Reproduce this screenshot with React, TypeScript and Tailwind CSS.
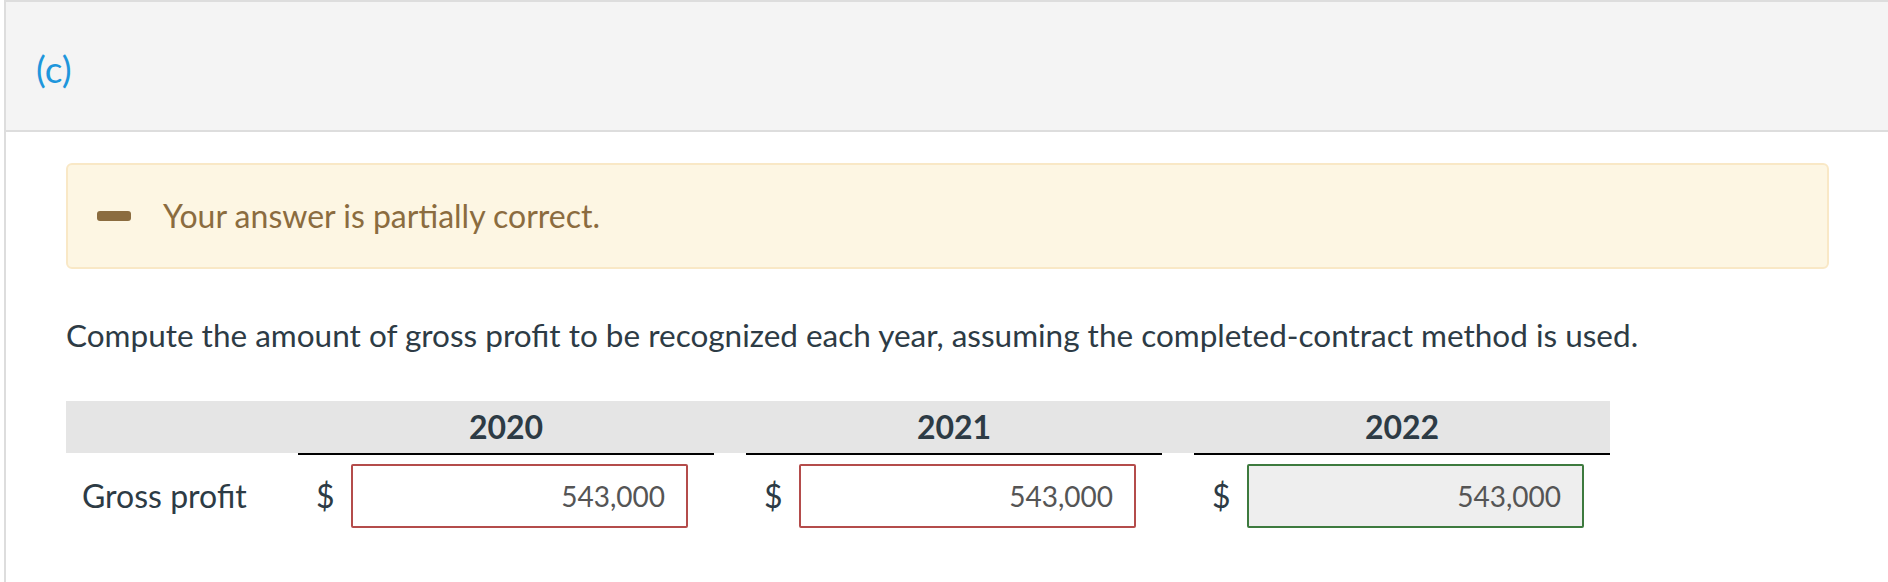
const years = [
  { year: "2020", value: "543,000", status: "wrong" },
  { year: "2021", value: "543,000", status: "wrong" },
  { year: "2022", value: "543,000", status: "right" },
];

const App = () => {
  return (
    <div className="min-h-screen bg-white pl-[4px] font-['Lato','Liberation_Sans',sans-serif]">
      <div className="min-h-[582px] border-l-2 border-t-2 border-[#dddddd]">
        <div className="flex h-[130px] items-center border-b-2 border-[#dddddd] bg-[#f4f4f4] pl-[30px] pt-[4px]">
          <span className="text-[37px] leading-none text-[#1e96dc]">(c)</span>
        </div>

        <div className="pl-[60px] pt-[31px]">
          <div className="flex h-[106px] w-[1763px] items-center rounded-[6px] border-2 border-[#f9e8c6] bg-[#fdf6e3] pl-[29px]">
            <span className="h-[10px] w-[34px] rounded-[3px] bg-[#8b6c3f]" />
            <span className="ml-[32px] text-[32px] leading-none text-[#8b6c3f]">
              Your answer is partially correct.
            </span>
          </div>

          <p className="mt-[43px] text-[31.5px] leading-[46px] text-[#2d3b45]">
            Compute the amount of gross profit to be recognized each year,
            assuming the completed-contract method is used.
          </p>

          <div className="mt-[43px] w-[1544px]">
            <div className="grid h-[52px] grid-cols-[200px_416px_416px_416px] items-center gap-x-[32px] bg-[#e5e5e5]">
              <div />
              {years.map((y) => (
                <div
                  key={y.year}
                  className="text-center text-[32px] font-bold leading-none text-[#2d3b45]"
                >
                  {y.year}
                </div>
              ))}
            </div>
            <div className="grid h-[2px] grid-cols-[200px_416px_416px_416px] gap-x-[32px]">
              <div />
              {years.map((y) => (
                <div key={y.year} className="bg-black" />
              ))}
            </div>

            <div className="mt-[9px] grid grid-cols-[200px_416px_416px_416px] items-center gap-x-[32px]">
              <div className="pl-[16px] text-[32px] text-[#2d3b45]">
                Gross profit
              </div>
              {years.map((y) => (
                <div key={y.year} className="flex items-center pl-[18px]">
                  <span className="w-[35px] text-[32px] text-[#2d3b45]">$</span>
                  <input
                    readOnly
                    value={y.value}
                    className={
                      y.status === "right"
                        ? "h-[64px] w-[337px] rounded-[2px] border-2 border-[#3d7a3e] bg-[#eeeeee] pr-[21px] text-right text-[28px] text-[#555555] outline-none"
                        : "h-[64px] w-[337px] rounded-[2px] border-2 border-[#b44c4b] bg-white pr-[21px] text-right text-[28px] text-[#555555] outline-none"
                    }
                  />
                </div>
              ))}
            </div>
          </div>
        </div>
      </div>
    </div>
  );
};

export default App;
